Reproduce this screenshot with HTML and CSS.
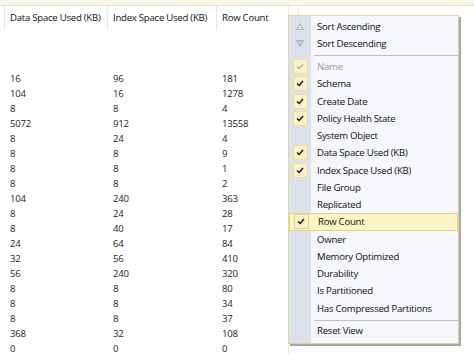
FILE: index.html
```html
<!DOCTYPE html>
<html>
<head>
<meta charset="utf-8">
<link rel="stylesheet" href="styles.css">
</head>
<body>
<div class="topband"></div>
<div class="grid">
  <div class="hdr">
    <div class="hcell">Data Space Used (KB)</div>
    <div class="hcell">Index Space Used (KB)</div>
    <div class="hcell">Row Count</div>
    <div class="hcell"></div>
  </div>
  <div class="rows">
    <div class="row"><span>16</span><span>96</span><span>181</span></div>
    <div class="row"><span>104</span><span>16</span><span>1278</span></div>
    <div class="row"><span>8</span><span>8</span><span>4</span></div>
    <div class="row"><span>5072</span><span>912</span><span>13558</span></div>
    <div class="row"><span>8</span><span>24</span><span>4</span></div>
    <div class="row"><span>8</span><span>8</span><span>9</span></div>
    <div class="row"><span>8</span><span>8</span><span>1</span></div>
    <div class="row"><span>8</span><span>8</span><span>2</span></div>
    <div class="row"><span>104</span><span>240</span><span>363</span></div>
    <div class="row"><span>8</span><span>24</span><span>28</span></div>
    <div class="row"><span>8</span><span>40</span><span>17</span></div>
    <div class="row"><span>24</span><span>64</span><span>84</span></div>
    <div class="row"><span>32</span><span>56</span><span>410</span></div>
    <div class="row"><span>56</span><span>240</span><span>320</span></div>
    <div class="row"><span>8</span><span>8</span><span>80</span></div>
    <div class="row"><span>8</span><span>8</span><span>34</span></div>
    <div class="row"><span>8</span><span>8</span><span>37</span></div>
    <div class="row"><span>368</span><span>32</span><span>108</span></div>
    <div class="row"><span>0</span><span>0</span><span>0</span></div>
  </div>
</div>

<div class="menu">
  <div class="item"><span class="ico"><svg width="8" height="7" viewBox="0 0 8 7"><path d="M4 0.5 L7.5 6.5 L0.5 6.5 Z" fill="none" stroke="#a9b2c4" stroke-width="1"/></svg></span><span class="lbl">Sort Ascending</span></div>
  <div class="item"><span class="ico"><svg width="8" height="7" viewBox="0 0 8 7"><path d="M0.5 0.5 L7.5 0.5 L4 6.5 Z" fill="#c3cad8" stroke="#a9b2c4" stroke-width="1"/></svg></span><span class="lbl">Sort Descending</span></div>
  <div class="sep"></div>
  <div class="item dis"><span class="ico"><span class="box"><svg width="8" height="7" viewBox="0 0 8 7"><path d="M1 3.5 L3.2 5.5 L7 1" fill="none" stroke="#b9b49a" stroke-width="1.5"/></svg></span></span><span class="lbl">Name</span></div>
  <div class="item"><span class="ico"><span class="box"><svg width="8" height="7" viewBox="0 0 8 7"><path d="M1 3.5 L3.2 5.5 L7 1" fill="none" stroke="#1b1b1b" stroke-width="1.5"/></svg></span></span><span class="lbl">Schema</span></div>
  <div class="item"><span class="ico"><span class="box"><svg width="8" height="7" viewBox="0 0 8 7"><path d="M1 3.5 L3.2 5.5 L7 1" fill="none" stroke="#1b1b1b" stroke-width="1.5"/></svg></span></span><span class="lbl">Create Date</span></div>
  <div class="item"><span class="ico"><span class="box"><svg width="8" height="7" viewBox="0 0 8 7"><path d="M1 3.5 L3.2 5.5 L7 1" fill="none" stroke="#1b1b1b" stroke-width="1.5"/></svg></span></span><span class="lbl">Policy Health State</span></div>
  <div class="item"><span class="ico"></span><span class="lbl">System Object</span></div>
  <div class="item"><span class="ico"><span class="box"><svg width="8" height="7" viewBox="0 0 8 7"><path d="M1 3.5 L3.2 5.5 L7 1" fill="none" stroke="#1b1b1b" stroke-width="1.5"/></svg></span></span><span class="lbl">Data Space Used (KB)</span></div>
  <div class="item"><span class="ico"><span class="box"><svg width="8" height="7" viewBox="0 0 8 7"><path d="M1 3.5 L3.2 5.5 L7 1" fill="none" stroke="#1b1b1b" stroke-width="1.5"/></svg></span></span><span class="lbl">Index Space Used (KB)</span></div>
  <div class="item"><span class="ico"></span><span class="lbl">File Group</span></div>
  <div class="item"><span class="ico"></span><span class="lbl">Replicated</span></div>
  <div class="item hot"><span class="ico"><span class="box"><svg width="8" height="7" viewBox="0 0 8 7"><path d="M1 3.5 L3.2 5.5 L7 1" fill="none" stroke="#1b1b1b" stroke-width="1.5"/></svg></span></span><span class="lbl">Row Count</span></div>
  <div class="item"><span class="ico"></span><span class="lbl">Owner</span></div>
  <div class="item"><span class="ico"></span><span class="lbl">Memory Optimized</span></div>
  <div class="item"><span class="ico"></span><span class="lbl">Durability</span></div>
  <div class="item"><span class="ico"></span><span class="lbl">Is Partitioned</span></div>
  <div class="item"><span class="ico"></span><span class="lbl">Has Compressed Partitions</span></div>
  <div class="sep"></div>
  <div class="item"><span class="ico"></span><span class="lbl">Reset View</span></div>
</div>
</body>
</html>
```

FILE: styles.css
```css
html, body {
  margin: 0;
  padding: 0;
  background: #ffffff;
  width: 474px;
  height: 354px;
  overflow: hidden;
  font-family: "Open Sans", "Noto Sans", sans-serif;
  font-size: 9.6px;
  letter-spacing: -0.25px;
  color: #1e1e1e;
}
.topband {
  height: 5px;
  background: #fbf8e6;
  border-bottom: 1px solid #e4e0cf;
}
.grid {
  padding-left: 4px;
  border-right: 1px solid #f1ecd0;
  width: 284px;
  height: 348px;
}
.hdr {
  display: grid;
  grid-template-columns: 103px 109px 82px 20px;
  height: 24px;
}
.hcell {
  border-left: 1px solid #e6e6e6;
  padding-left: 5px;
  line-height: 24px;
  color: #111111;
  white-space: nowrap;
  overflow: hidden;
}
.rows {
  padding-top: 41px;
}
.row {
  display: grid;
  grid-template-columns: 103px 109px 82px;
  height: 15px;
  line-height: 15px;
}
.row span {
  padding-left: 6px;
}
.menu {
  position: absolute;
  left: 288px;
  top: 15px;
  width: 169px;
  height: 325px;
  border: 1px solid #e3d497;
  background: linear-gradient(to right, #dce2ec 0, #dce2ec 22px, #f5f7fc 22px);
  box-shadow: 2px 2px 0 #a8a8a8;
  padding-top: 2px;
  box-sizing: content-box;
}
.item {
  display: flex;
  align-items: center;
  height: 17.25px;
  box-sizing: border-box;
  color: #0f0f0f;
}
.item.dis {
  color: #9a9a9a;
}
.item.hot {
  background: #fdf4c4;
  border: 1px solid #e8cf83;
}
.ico {
  width: 22px;
  height: 100%;
  display: flex;
  align-items: center;
  justify-content: center;
  flex: none;
}
.box {
  width: 15px;
  height: 15px;
  box-sizing: border-box;
  background: #fcf1c6;
  border: 1px solid #eedca0;
  display: flex;
  align-items: center;
  justify-content: center;
}
.item.hot .box {
  border-color: #e8cf83;
}
.lbl {
  padding-left: 6px;
  white-space: nowrap;
}
.sep {
  height: 5.5px;
  margin-left: 25px;
  display: flex;
  align-items: center;
}
.sep::before {
  content: "";
  display: block;
  width: 100%;
  height: 1px;
  background: #bcc0c9;
  margin-top: 1px;
}
```
